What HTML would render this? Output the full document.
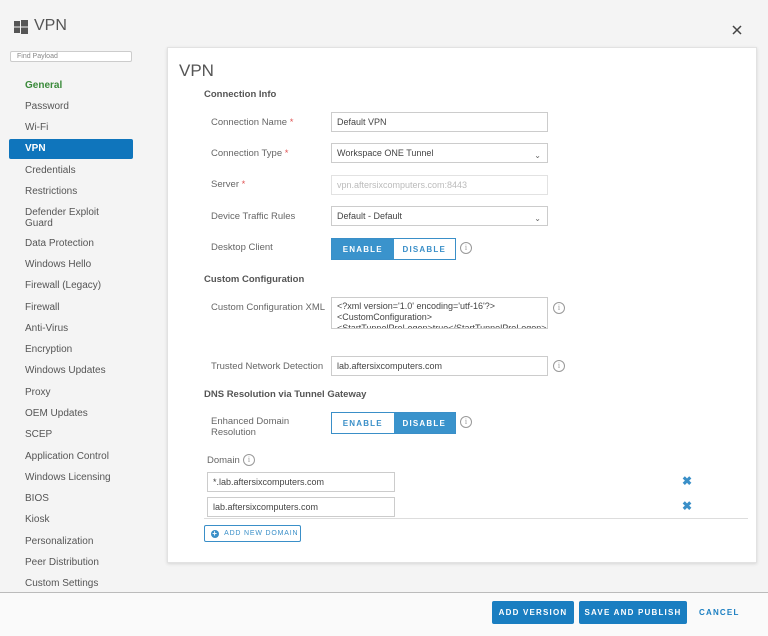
<!DOCTYPE html>
<html><head><style>
*{box-sizing:border-box;margin:0;padding:0}
body{width:768px;height:636px;background:#f4f4f4;font-family:"Liberation Sans",sans-serif;position:relative;overflow:hidden;color:#555}
.a{position:absolute}
.nav{position:absolute;left:25px;font-size:10px;color:#555;line-height:11px}
.lbl{position:absolute;left:211px;font-size:9.5px;color:#666;line-height:11px}
.req{color:#e05555}
.inp{position:absolute;left:331px;width:217px;height:20px;border:1px solid #ccc;background:#fff;font-size:9px;color:#444;padding:0 5px;line-height:18px}
.sec{position:absolute;left:204px;font-size:9.5px;color:#555;font-weight:bold;line-height:11px}
.tog{position:absolute;left:331px;width:125px;height:22px;border:1px solid #3a8fc8;display:flex;font-size:8px;font-weight:bold;letter-spacing:1.2px}
.tog div{flex:1;display:flex;align-items:center;justify-content:center}
.on{background:#3a93cc;color:#fff}.off{background:#fff;color:#3a8fc8}
.info{position:absolute;width:12px;height:12px;border:1px solid #999;border-radius:50%;font-size:8px;color:#999;text-align:center;line-height:10px;font-family:"Liberation Serif",serif}
.chev{position:absolute;right:6px;top:3px;font-size:8px;color:#666}
.x{position:absolute;left:682px;font-size:12px;color:#3a8fc8;font-weight:bold}
.btn{position:absolute;top:601px;height:23px;background:#1a7ec1;color:#fff;font-size:8px;font-weight:bold;letter-spacing:1.2px;display:flex;align-items:center;justify-content:center;border-radius:2px}
</style></head><body>
<svg class="a" style="left:14px;top:20px" width="14" height="14" viewBox="0 0 14 14"><g fill="#555"><rect x="0" y="1" width="6" height="5.5"/><rect x="7" y="0" width="7" height="6.5"/><rect x="0" y="7.5" width="6" height="5.5"/><rect x="7" y="7.5" width="7" height="6.5"/></g></svg>
<div class="a" style="left:34px;top:17px;font-size:16px;color:#555">VPN</div>
<svg class="a" style="left:732px;top:25px" width="10" height="10" viewBox="0 0 10 10"><path d="M1 1L9 9M9 1L1 9" stroke="#444" stroke-width="1.5"/></svg>
<div class="a" style="left:10px;top:51px;width:122px;height:11px;border:1px solid #ccc;border-radius:2px;background:#fff;font-size:7px;color:#888;padding-left:6px;line-height:9px">Find Payload</div>
<div class="nav" style="top:80px;color:#3a8a3a;font-weight:bold">General</div>
<div class="nav" style="top:101px">Password</div>
<div class="nav" style="top:122px">Wi-Fi</div>
<div class="a" style="left:9px;top:139px;width:124px;height:20px;background:#0f75bc;border-radius:2px"></div>
<div class="nav" style="top:143px;color:#fff;font-weight:bold">VPN</div>
<div class="nav" style="top:165px">Credentials</div>
<div class="nav" style="top:186px">Restrictions</div>
<div class="nav" style="top:207px">Defender Exploit<br>Guard</div>
<div class="nav" style="top:238px">Data Protection</div>
<div class="nav" style="top:259px">Windows Hello</div>
<div class="nav" style="top:280px">Firewall (Legacy)</div>
<div class="nav" style="top:302px">Firewall</div>
<div class="nav" style="top:323px">Anti-Virus</div>
<div class="nav" style="top:344px">Encryption</div>
<div class="nav" style="top:365px">Windows Updates</div>
<div class="nav" style="top:387px">Proxy</div>
<div class="nav" style="top:408px">OEM Updates</div>
<div class="nav" style="top:429px">SCEP</div>
<div class="nav" style="top:451px">Application Control</div>
<div class="nav" style="top:472px">Windows Licensing</div>
<div class="nav" style="top:493px">BIOS</div>
<div class="nav" style="top:514px">Kiosk</div>
<div class="nav" style="top:536px">Personalization</div>
<div class="nav" style="top:557px">Peer Distribution</div>
<div class="nav" style="top:578px">Custom Settings</div>

<div class="a" style="left:167px;top:47px;width:590px;height:516px;background:#fff;border:1px solid #e2e2e2;box-shadow:0 1px 3px rgba(0,0,0,.12)"></div>
<div class="a" style="left:179px;top:61px;font-size:17px;color:#555">VPN</div>
<div class="sec" style="top:89px">Connection Info</div>
<div class="lbl" style="top:117px">Connection Name <span class="req">*</span></div>
<div class="inp" style="top:112px">Default VPN</div>
<div class="lbl" style="top:148px">Connection Type <span class="req">*</span></div>
<div class="inp" style="top:143px">Workspace ONE Tunnel<span class="chev">⌄</span></div>
<div class="lbl" style="top:179px">Server <span class="req">*</span></div>
<div class="inp" style="top:175px;color:#bbb;border-color:#e2e2e2">vpn.aftersixcomputers.com:8443</div>
<div class="lbl" style="top:211px">Device Traffic Rules</div>
<div class="inp" style="top:206px">Default - Default<span class="chev">⌄</span></div>
<div class="lbl" style="top:242px">Desktop Client</div>
<div class="tog" style="top:238px"><div class="on">ENABLE</div><div class="off">DISABLE</div></div>
<div class="info" style="left:460px;top:242px">i</div>
<div class="sec" style="top:274px">Custom Configuration</div>
<div class="lbl" style="top:302px">Custom Configuration XML</div>
<div class="a" style="left:331px;top:297px;width:217px;height:32px;border:1px solid #ccc;font-size:9px;color:#444;padding:3px 5px;line-height:11px;overflow:hidden">&lt;?xml version='1.0' encoding='utf-16'?&gt;<br>&lt;CustomConfiguration&gt;<br>&lt;StartTunnelPreLogon&gt;true&lt;/StartTunnelPreLogon&gt;</div>
<div class="info" style="left:553px;top:302px">i</div>
<div class="lbl" style="top:361px">Trusted Network Detection</div>
<div class="inp" style="top:356px">lab.aftersixcomputers.com</div>
<div class="info" style="left:553px;top:360px">i</div>
<div class="sec" style="top:389px">DNS Resolution via Tunnel Gateway</div>
<div class="lbl" style="top:416px">Enhanced Domain<br>Resolution</div>
<div class="tog" style="top:412px"><div class="off">ENABLE</div><div class="on">DISABLE</div></div>
<div class="info" style="left:460px;top:416px">i</div>
<div class="lbl" style="left:207px;top:455px">Domain</div>
<div class="info" style="left:243px;top:454px">i</div>
<div class="inp" style="left:207px;width:188px;top:472px">*.lab.aftersixcomputers.com</div>
<div class="x" style="top:474px">✖</div>
<div class="inp" style="left:207px;width:188px;top:497px">lab.aftersixcomputers.com</div>
<div class="x" style="top:499px">✖</div>
<div class="a" style="left:204px;top:518px;width:544px;height:1px;background:#ddd"></div>
<div class="a" style="left:204px;top:525px;width:97px;height:17px;border:1px solid #3a8fc8;border-radius:2px;font-size:7px;color:#3a8fc8;letter-spacing:.8px;line-height:15px;padding-left:6px"><span style="display:inline-block;width:8px;height:8px;border-radius:50%;background:#3a8fc8;color:#fff;font-size:8px;line-height:8px;text-align:center;font-weight:bold;vertical-align:-1px">+</span>&nbsp; ADD NEW DOMAIN</div>

<div class="a" style="left:0;top:592px;width:768px;height:44px;background:#fafafa;border-top:1px solid #bbb"></div>
<div class="btn" style="left:492px;width:82px">ADD VERSION</div>
<div class="btn" style="left:579px;width:108px">SAVE AND PUBLISH</div>
<div class="a" style="left:699px;top:608px;font-size:8px;font-weight:bold;letter-spacing:1.2px;color:#1a7ec1">CANCEL</div>
</body></html>
